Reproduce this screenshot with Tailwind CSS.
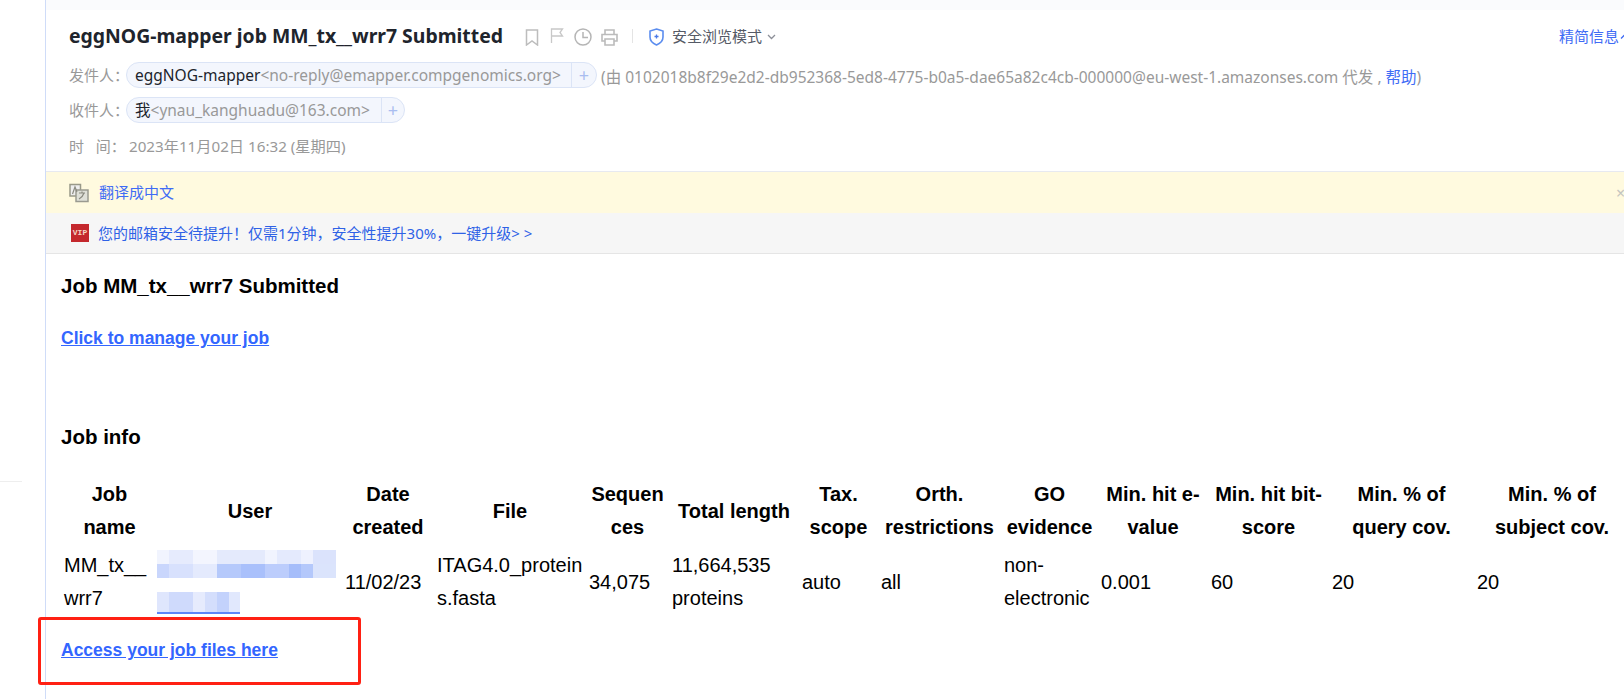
<!DOCTYPE html>
<html lang="en">
<head>
  <meta charset="UTF-8">
  <meta name="viewport" content="width=device-width, initial-scale=1.0">
  <title>eggNOG-mapper job</title>
  <script src="https://cdn.jsdelivr.net/npm/@tailwindcss/browser@4"></script>
</head>
<body class="bg-white overflow-hidden">
  <div class="flex w-[1624px] h-[699px] overflow-hidden font-['Noto_Sans','Noto_Sans_CJK_SC',sans-serif]">
    <!-- left strip -->
    <div class="w-[46px] shrink-0 pt-[481px] border-r border-[#cfdcf8] h-full">
      <div class="w-[22px] h-px bg-[#eeeeee]"></div>
    </div>

    <div class="w-[1578px] shrink-0">
      <div class="h-2.5 bg-[#fafbfd]"></div>

      <!-- mail header -->
      <div class="h-[161px] pl-[23px] text-[15.5px] text-[#999999]">
        <div class="flex items-center h-[52px]">
          <h1 class="text-[19.4px] font-bold text-[#20242c] w-[455px] whitespace-nowrap">eggNOG-mapper job MM_tx__wrr7 Submitted</h1>
          <svg class="w-[14px] h-[17px] ml-[1px] mt-0.5" viewBox="0 0 14 17" fill="none" stroke="#bdbdbd" stroke-width="1.5"><path d="M1.5 1h11v15l-5.500-4-5.500 4z"/></svg>
          <svg class="w-[14px] h-[15px] ml-[11px] mt-[-1px]" viewBox="0 0 14 15" fill="none" stroke="#c8c8c8" stroke-width="1.300"><path d="M1.500 15V1h11l-2.500 3.500 2.500 3.500h-11"/></svg>
          <svg class="w-[18px] h-[18px] ml-[10px] mt-0.5" viewBox="0 0 18 18" fill="none" stroke="#b5b5b5" stroke-width="1.500"><circle cx="9" cy="9" r="8"/><path d="M9 4v5.500h5"/></svg>
          <svg class="w-[17px] h-[17px] ml-[9px] mt-0.5" viewBox="0 0 17 17" fill="none" stroke="#bbbbbb" stroke-width="1.600"><path d="M4 5V1h9v4M4 12H1V5.500h15V12h-3M4 10h9v6H4z"/></svg>
          <div class="w-px h-[14px] bg-[#e4e4e4] ml-[14px]"></div>
          <svg class="w-[15px] h-[18px] ml-[16px] mt-0.5" viewBox="0 0 15 18" fill="none"><path d="M7.500 1 14 3v6c0 4-3 6.500-6.500 8C4 15.500 1 13 1 9V3z" stroke="#5b8def" stroke-width="1.600"/><path d="M7.500 6.500v4M5.500 8.500h4" stroke="#4a7ae8" stroke-width="1.300"/></svg>
          <span class="ml-2 text-[15px] text-[#555a66] whitespace-nowrap">安全浏览模式</span>
          <svg class="w-[9px] h-[6px] ml-[5px] mt-0.5" viewBox="0 0 9 6" fill="none" stroke="#8c8f98" stroke-width="1.300"><path d="m1 1 3.500 3.500L8 1"/></svg>
          <span class="ml-auto text-[15px] text-[#3f6cf5] whitespace-nowrap">精简信息</span>
          <svg class="w-3 h-2 ml-[1px] shrink-0 mr-[-8px]" viewBox="0 0 12 8" fill="none" stroke="#3f6cf5" stroke-width="1.300"><path d="m1 6.500 5-5 5 5"/></svg>
        </div>

        <div class="flex items-center h-[26px] whitespace-nowrap">
          <span class="w-[57px] text-[15px]">发件人：</span>
          <div class="flex items-center h-[26px] w-[471px] rounded-[13px] border border-[#dbe4f6] bg-[#f3f6fd] pl-2">
            <span class="text-[#20242c] pt-[2px]">eggNOG-mapper</span><span class="pt-[2px]">&lt;no-reply@emapper.compgenomics.org&gt;</span>
            <span class="ml-auto w-[25px] h-full border-l border-[#dbe4f6] text-[#a9bdf0] text-lg leading-none flex items-center justify-center">+</span>
          </div>
          <span class="ml-[4px] pt-[5px]">(由 0102018b8f29e2d2-db952368-5ed8-4775-b0a5-dae65a82c4cb-000000@eu-west-1.amazonses.com 代发 , <span class="text-[#3f6cf5]">帮助</span>)</span>
        </div>

        <div class="flex items-center h-[26px] mt-[9px] whitespace-nowrap">
          <span class="w-[57px] text-[15px]">收件人：</span>
          <div class="flex items-center h-[26px] w-[279px] rounded-[13px] border border-[#dbe4f6] bg-[#f3f6fd] pl-2">
            <span class="text-[#20242c] pt-[2px]">我</span><span class="pt-[2px]">&lt;ynau_kanghuadu@163.com&gt;</span>
            <span class="ml-auto w-[23px] h-full border-l border-[#dbe4f6] text-[#a9bdf0] text-lg leading-none flex items-center justify-center">+</span>
          </div>
        </div>

        <div class="flex items-center h-5 mt-[13px] whitespace-nowrap text-[15.2px]">
          <span class="w-[60px] text-[15px]">时&nbsp;&nbsp;&nbsp;间：</span><span>2023年11月02日 16:32 (星期四)</span>
        </div>
      </div>

      <!-- notice bars -->
      <div class="relative flex items-center h-[42px] bg-[#fffadf] border-t border-[#e7e9f0] pl-[23px] text-[15px] text-[#3f6cf5]">
        <svg class="w-5 h-5 mr-[10px]" viewBox="0 0 20 20" fill="none"><path d="M1 1.500h10.500V13H1z" fill="#eeeeee" stroke="#999988" stroke-width="1.500"/><path d="M7 7h12v11.500H7z" fill="#dfe0d8" stroke="#9a9a90" stroke-width="1.500"/><path d="m3.500 11 2.500-7 2 5M10 10h6M13 8.500v1.500M15 10c-1 3-3 5-5 6" stroke="#8a8a80" stroke-width="1.200"/></svg>
        <span>翻译成中文</span>
        <span class="absolute left-[1570px] top-[9px] text-[#c4c4c0] text-base">×</span>
      </div>
      <div class="flex items-center h-[41px] bg-[#f6f6f6] border-b border-[#e5e5e5] pl-[25px] text-[15px] text-[#2f62e6]">
        <span class="w-[18px] h-[18px] mr-[9px] bg-[#c4282d] text-[#f4d5c5] text-[8px] leading-[18px] text-center font-bold font-['Liberation_Mono',monospace]">VIP</span>
        <span>您的邮箱安全待提升！仅需1分钟，安全性提升30%，一键升级&gt; &gt;</span>
      </div>

      <!-- mail body -->
      <div class="pl-[15px] font-['Liberation_Sans',sans-serif] text-[17.5px] leading-[33px] text-black">
        <div class="pt-[15px] font-bold text-[20.5px]">Job MM_tx__wrr7 Submitted</div>
        <div class="mt-5"><a href="#" class="font-bold text-[#3366ff] underline">Click to manage your job</a></div>
        <div class="mt-[65px] font-bold text-[20.5px]">Job info</div>

        <table class="table-fixed w-[1569px] mt-[25px] wrap-anywhere text-[20px]">
          <colgroup>
            <col class="w-[93px]"><col class="w-[188px]"><col class="w-[92px]"><col class="w-[152px]"><col class="w-[83px]"><col class="w-[130px]"><col class="w-[79px]"><col class="w-[123px]"><col class="w-[97px]"><col class="w-[110px]"><col class="w-[121px]"><col class="w-[145px]"><col class="w-[156px]">
          </colgroup>
          <thead>
            <tr class="font-bold text-center">
              <th class="pl-[5px] pr-[1px] pb-[5px]">Job name</th>
              <th class="pl-[5px] pr-[1px] pb-[5px]">User</th>
              <th class="px-[3px] pb-[5px]">Date created</th>
              <th class="px-[3px] pb-[5px]">File</th>
              <th class="px-[3px] pb-[5px]">Sequences</th>
              <th class="px-[3px] pb-[5px]">Total length</th>
              <th class="px-[3px] pb-[5px]">Tax. scope</th>
              <th class="px-[3px] pb-[5px]">Orth. restrictions</th>
              <th class="px-[3px] pb-[5px]">GO evidence</th>
              <th class="px-[3px] pb-[5px]">Min. hit e-value</th>
              <th class="px-[3px] pb-[5px]">Min. hit bit-score</th>
              <th class="px-[3px] pb-[5px]">Min. % of query cov.</th>
              <th class="px-[3px] pb-[5px]">Min. % of subject cov.</th>
            </tr>
          </thead>
          <tbody>
            <tr>
              <td class="px-[3px]">MM_tx__wrr7</td>
              <td class="px-[3px]">
                <!-- blurred address -->
                <div class="w-[179px] h-[28px] flex flex-col">
                  <div class="flex h-[14px]">
                    <div class="w-[12px] bg-[#f1f4fe]"></div><div class="w-[24px] bg-[#e6ebfd]"></div><div class="w-[24px] bg-[#f3f5fe]"></div><div class="w-[48px] bg-[#e4eafc]"></div><div class="w-[12px] bg-[#f1f4fe]"></div><div class="w-[24px] bg-[#e4eafd]"></div><div class="w-[12px] bg-[#eef1fe]"></div><div class="w-[23px] bg-[#dbe3fc]"></div>
                  </div>
                  <div class="flex h-[14px]">
                    <div class="w-[12px] bg-[#c9d6fc]"></div><div class="w-[24px] bg-[#d8e1fd]"></div><div class="w-[24px] bg-[#e4eafd]"></div><div class="w-[24px] bg-[#b5c9fb]"></div><div class="w-[24px] bg-[#a9c0fb]"></div><div class="w-[24px] bg-[#bccdfc]"></div><div class="w-[12px] bg-[#a5bdfa]"></div><div class="w-[12px] bg-[#b4c8fb]"></div><div class="w-[23px] bg-[#dbe4fc]"></div>
                  </div>
                </div>
                <div class="flex w-[83px] h-[22px] mt-[14px] border-b-2 border-[#5c86f8]">
                  <div class="w-[12px] bg-[#dfe6fd]"></div><div class="w-[24px] bg-[#cfdafc]"></div><div class="w-[12px] bg-[#e6ebfd]"></div><div class="w-[12px] bg-[#d4defc]"></div><div class="w-[12px] bg-[#c3d2fc]"></div><div class="w-[11px] bg-[#e1e8fd]"></div>
                </div>
              </td>
              <td class="px-[3px]">11/02/23</td>
              <td class="px-[3px]">ITAG4.0_proteins.fasta</td>
              <td class="px-[3px]">34,075</td>
              <td class="px-[3px]">11,664,535 proteins</td>
              <td class="px-[3px]">auto</td>
              <td class="px-[3px]">all</td>
              <td class="px-[3px]">non-electronic</td>
              <td class="px-[3px]">0.001</td>
              <td class="px-[3px]">60</td>
              <td class="px-[3px]">20</td>
              <td class="px-[3px]">20</td>
            </tr>
          </tbody>
        </table>

        <div class="mt-[19px]"><a href="#" class="font-bold text-[#3366ff] underline">Access your job files here</a></div>
      </div>
    </div>
  </div>

  <!-- red annotation box drawn over the screenshot -->
  <div class="absolute left-[38px] top-[617px] w-[323px] h-[68px] border-[3px] border-[#ff2013] rounded-[3px]"></div>
</body>
</html>
